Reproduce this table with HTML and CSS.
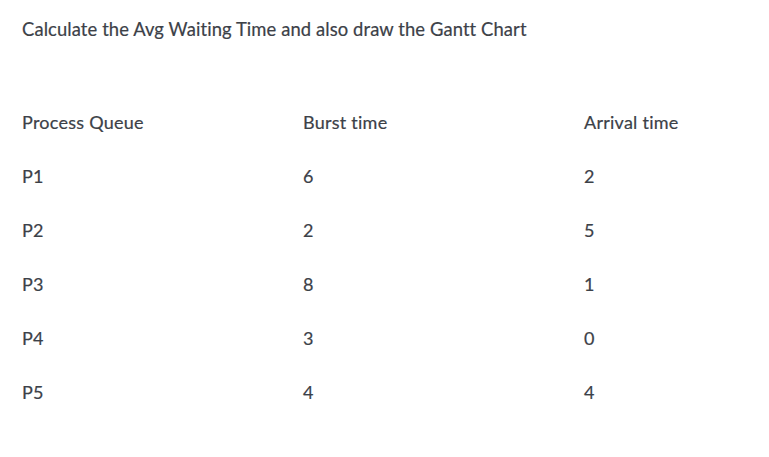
FILE: index.html
```html
<!DOCTYPE html>
<html>
<head>
<meta charset="utf-8">
<link rel="stylesheet" href="styles.css">
</head>
<body>
<div class="page">
  <p class="question">Calculate the Avg Waiting Time and also draw the Gantt Chart</p>
  <div class="table">
    <div class="row head"><div>Process Queue</div><div>Burst time</div><div>Arrival time</div></div>
    <div class="row"><div>P1</div><div>6</div><div>2</div></div>
    <div class="row"><div>P2</div><div>2</div><div>5</div></div>
    <div class="row"><div>P3</div><div>8</div><div>1</div></div>
    <div class="row"><div>P4</div><div>3</div><div>0</div></div>
    <div class="row"><div>P5</div><div>4</div><div>4</div></div>
  </div>
</div>
</body>
</html>
```
FILE: styles.css
```css
html, body { margin: 0; padding: 0; background: #fff; }
body { font-family: "Lato", "Open Sans", sans-serif; color: #3c4148; }
.page { padding: 17px 22px 0 22px; }
.question { margin: 0; font-size: 18.4px; line-height: 24px; letter-spacing: 0.1px; -webkit-text-stroke: 0.2px #3c4148; }
.table { margin-top: 69px; }
.row { display: grid; grid-template-columns: 281px 281px auto; height: 54px; font-size: 18px; line-height: 24px; letter-spacing: 0.25px; -webkit-text-stroke: 0.2px #3c4148; }
```
